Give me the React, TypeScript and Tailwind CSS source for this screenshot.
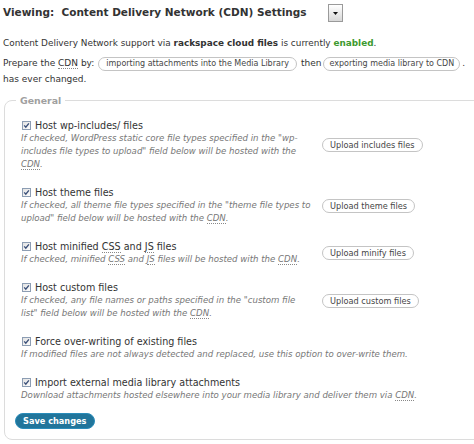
import React from "react";

const font = { fontFamily: '"DejaVu Sans", Verdana, sans-serif' };

function Abbr({ children }: { children: React.ReactNode }) {
  return (
    <span className="border-b border-dotted border-[#888]">{children}</span>
  );
}

function Check() {
  return (
    <svg width="9" height="9" viewBox="0 0 9 9" className="shrink-0 ml-[1px] mr-[4px]">
      <defs>
        <linearGradient id="cbg" x1="0" y1="0" x2="1" y2="1">
          <stop offset="0" stopColor="#e0e0e0" />
          <stop offset="1" stopColor="#ffffff" />
        </linearGradient>
      </defs>
      <rect x="0.5" y="0.5" width="8" height="8" fill="url(#cbg)" stroke="#8c9db3" />
      <path d="M2.2 4.4 L3.8 6.2 L6.9 2.4" fill="none" stroke="#3b5079" strokeWidth="1.4" />
    </svg>
  );
}

function PillButton({ children, className = "" }: { children: React.ReactNode; className?: string }) {
  return (
    <span
      className={`inline-flex items-center h-[14px] rounded-full border border-[#c4c4c4] bg-white text-[#464646] leading-[12px] whitespace-nowrap ${className}`}
    >
      {children}
    </span>
  );
}

function Option({
  label,
  desc,
  button,
  first = false,
}: {
  label: React.ReactNode;
  desc: React.ReactNode;
  button?: string;
  first?: boolean;
}) {
  return (
    <div className={`flex items-center ${first ? "mt-[12px]" : "mt-[15px]"}`}>
      <div className={button ? "w-[290px] shrink-0" : ""}>
        <div className="flex items-center h-[13px] text-[9.6px] leading-[13px] text-[#333] whitespace-nowrap">
          <Check />
          <span>{label}</span>
        </div>
        <div className="text-[8.6px] leading-[13px] italic text-[#777] whitespace-nowrap">{desc}</div>
      </div>
      {button && <PillButton className="ml-[11px] px-[7px] text-[8.2px]">{button}</PillButton>}
    </div>
  );
}

export default function App() {
  return (
    <div className="w-[474px] h-[444px] overflow-hidden bg-white" style={font}>
      <div className="flex items-center h-[18px] mt-[4px] ml-[3px]">
        <span className="text-[10.5px] font-bold text-[#333] whitespace-nowrap">
          Viewing:&nbsp;&nbsp;Content Delivery Network (CDN) Settings
        </span>
        <span className="ml-[21px] w-[15px] h-[18px] border border-[#9a9a9a] bg-gradient-to-b from-[#ffffff] to-[#d8d8d8] flex items-center justify-center">
          <svg width="5" height="3" viewBox="0 0 5 3">
            <path d="M0 0 H5 L2.5 3 Z" fill="#111" />
          </svg>
        </span>
      </div>
      <div className="mt-[15px] ml-[3px] text-[8.9px] leading-[13px] text-[#333] whitespace-nowrap">
        Content Delivery Network support via <b>rackspace cloud files</b> is currently{" "}
        <b className="text-[#3d9a2f]">enabled</b>.
      </div>
      <div className="mt-[7px] ml-[3px] flex items-center h-[14px] text-[9px] text-[#333] whitespace-nowrap">
        <span>
          Prepare the <Abbr>CDN</Abbr> by:
        </span>
        <PillButton className="ml-[4px] px-[7px] text-[8px]">importing attachments into the Media Library</PillButton>
        <span className="ml-[4px] mr-[2px]">then</span>
        <PillButton className="px-[5px] text-[8px]">exporting media library to CDN</PillButton>
        <span className="ml-[2px]">.</span>
      </div>
      <div className="mt-[2px] ml-[3px] text-[9px] leading-[13px] text-[#333] whitespace-nowrap">
        has ever changed.
      </div>
      <fieldset className="mt-[8px] ml-[4px] w-[500px] border border-[#dcdcdc] rounded-[8px] pl-[16px] pb-[10px]">
        <legend className="-ml-[5px] px-[4px] text-[9.4px] leading-[13px] font-bold text-[#a0a0a0]">General</legend>
        <Option
          first
          label="Host wp-includes/ files"
          desc={
            <>
              If checked, WordPress static core file types specified in the "wp-
              <br />
              includes file types to upload" field below will be hosted with the
              <br />
              <Abbr>CDN</Abbr>.
            </>
          }
          button="Upload includes files"
        />
        <Option
          label="Host theme files"
          desc={
            <>
              If checked, all theme file types specified in the "theme file types to
              <br />
              upload" field below will be hosted with the <Abbr>CDN</Abbr>.
            </>
          }
          button="Upload theme files"
        />
        <Option
          label={
            <>
              Host minified <Abbr>CSS</Abbr> and <Abbr>JS</Abbr> files
            </>
          }
          desc={
            <>
              If checked, minified <Abbr>CSS</Abbr> and <Abbr>JS</Abbr> files will be hosted with the{" "}
              <Abbr>CDN</Abbr>.
            </>
          }
          button="Upload minify files"
        />
        <Option
          label="Host custom files"
          desc={
            <>
              If checked, any file names or paths specified in the "custom file
              <br />
              list" field below will be hosted with the <Abbr>CDN</Abbr>.
            </>
          }
          button="Upload custom files"
        />
        <Option
          label="Force over-writing of existing files"
          desc="If modified files are not always detected and replaced, use this option to over-write them."
        />
        <Option
          label="Import external media library attachments"
          desc={
            <>
              Download attachments hosted elsewhere into your media library and deliver them via{" "}
              <Abbr>CDN</Abbr>.
            </>
          }
        />
        <div className="flex mt-[11px] -ml-[6px]">
          <span className="inline-flex items-center h-[16px] px-[7px] rounded-full bg-[#21759b] border border-[#298cba] text-white text-[8.2px] font-bold leading-[13px]">
            Save changes
          </span>
        </div>
      </fieldset>
    </div>
  );
}
